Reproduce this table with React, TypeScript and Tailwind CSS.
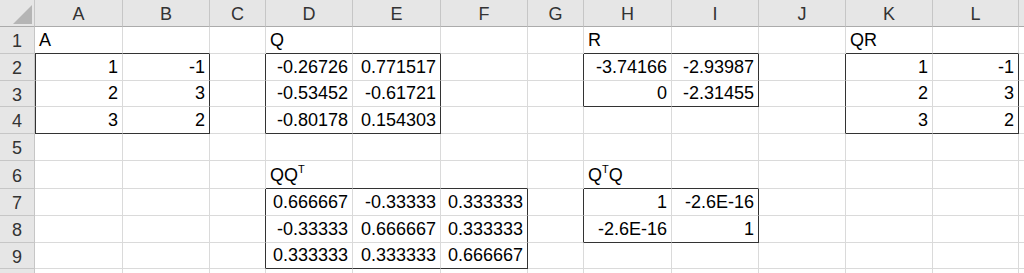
import React from "react";

type Cell = { v: React.ReactNode; left?: boolean };

const COLS = ["A", "B", "C", "D", "E", "F", "G", "H", "I", "J", "K", "L", ""];
const ROW_COUNT = 10;

const T = <sup className="text-[11px] top-[-8px]">T</sup>;

// sheet contents keyed by "col,row" (col index from A = 0, rows from 1)
const DATA: Record<string, Cell> = {
  "0,1": { v: "A", left: true },
  "3,1": { v: "Q", left: true },
  "7,1": { v: "R", left: true },
  "10,1": { v: "QR", left: true },

  "0,2": { v: "1" },
  "1,2": { v: "-1" },
  "3,2": { v: "-0.26726" },
  "4,2": { v: "0.771517" },
  "7,2": { v: "-3.74166" },
  "8,2": { v: "-2.93987" },
  "10,2": { v: "1" },
  "11,2": { v: "-1" },

  "0,3": { v: "2" },
  "1,3": { v: "3" },
  "3,3": { v: "-0.53452" },
  "4,3": { v: "-0.61721" },
  "7,3": { v: "0" },
  "8,3": { v: "-2.31455" },
  "10,3": { v: "2" },
  "11,3": { v: "3" },

  "0,4": { v: "3" },
  "1,4": { v: "2" },
  "3,4": { v: "-0.80178" },
  "4,4": { v: "0.154303" },
  "10,4": { v: "3" },
  "11,4": { v: "2" },

  "3,6": { v: <>QQ{T}</>, left: true },
  "7,6": { v: <>Q{T}Q</>, left: true },

  "3,7": { v: "0.666667" },
  "4,7": { v: "-0.33333" },
  "5,7": { v: "0.333333" },
  "7,7": { v: "1" },
  "8,7": { v: "-2.6E-16" },

  "3,8": { v: "-0.33333" },
  "4,8": { v: "0.666667" },
  "5,8": { v: "0.333333" },
  "7,8": { v: "-2.6E-16" },
  "8,8": { v: "1" },

  "3,9": { v: "0.333333" },
  "4,9": { v: "0.333333" },
  "5,9": { v: "0.666667" },
};

// outlined ranges: columns c0..c1, rows r0..r1
const BOXES = [
  { c0: 0, c1: 1, r0: 2, r1: 4 },
  { c0: 3, c1: 4, r0: 2, r1: 4 },
  { c0: 7, c1: 8, r0: 2, r1: 3 },
  { c0: 10, c1: 11, r0: 2, r1: 4 },
  { c0: 3, c1: 5, r0: 7, r1: 9 },
  { c0: 7, c1: 8, r0: 7, r1: 8 },
];

const rightDark = (c: number, r: number) =>
  BOXES.some((b) => r >= b.r0 && r <= b.r1 && (c === b.c1 || c === b.c0 - 1));
const bottomDark = (c: number, r: number) =>
  BOXES.some((b) => c >= b.c0 && c <= b.c1 && (r === b.r1 || r === b.r0 - 1));
const leftDark = (c: number, r: number) =>
  c === 0 && BOXES.some((b) => b.c0 === 0 && r >= b.r0 && r <= b.r1);

function Corner() {
  return (
    <div className="flex items-end justify-end bg-[#e6e6e6] border-r border-b border-r-[#c6c6c6] border-b-[#ababab] pr-[2px] pb-[2px]">
      <svg width="19" height="19" viewBox="0 0 19 19">
        <polygon points="19,0 19,19 0,19" fill="#b5b5b5" />
      </svg>
    </div>
  );
}

export default function App() {
  const rows = Array.from({ length: ROW_COUNT }, (_, i) => i + 1);
  return (
    <div
      className="w-[1024px] h-[273px] overflow-hidden bg-white text-[18px] text-black"
      style={{ fontFamily: '"Liberation Sans", Arial, sans-serif' }}
    >
      <div className="grid grid-cols-[35px_88px_87px_56px_87px_88px_87px_56px_88px_87px_87px_87px_86px_1fr] grid-rows-[27px_27px_27px_26px_27px_27px_28px_27px_27px_26px_27px]">
        <Corner />
        {COLS.map((c, i) => (
          <div
            key={"h" + i}
            className="flex items-center justify-center bg-[#e6e6e6] border-r border-b border-r-[#c6c6c6] border-b-[#ababab] text-[#333] leading-none pt-[2px]"
          >
            {c}
          </div>
        ))}
        {rows.map((r) => (
          <React.Fragment key={"r" + r}>
            <div className="flex items-center justify-center bg-[#e6e6e6] border-r border-b border-r-[#c6c6c6] border-b-[#c6c6c6] text-[#333] leading-none pt-[2px]">
              {r < ROW_COUNT ? r : null}
            </div>
            {COLS.map((_, c) => {
              const cell = DATA[c + "," + r];
              const rd = rightDark(c, r);
              const bd = bottomDark(c, r);
              const ld = leftDark(c, r);
              return (
                <div
                  key={c + "," + r}
                  className={
                    "flex items-end whitespace-nowrap overflow-visible leading-[20px] pb-[3px] px-[4px] border-r border-b " +
                    (rd ? "border-r-[#333333] " : "border-r-[#dadada] ") +
                    (bd ? "border-b-[#333333] " : "border-b-[#dadada] ") +
                    (ld ? "border-l border-l-[#333333] " : "") +
                    (cell && cell.left ? "justify-start" : "justify-end")
                  }
                >
                  {cell ? <span>{cell.v}</span> : null}
                </div>
              );
            })}
          </React.Fragment>
        ))}
      </div>
    </div>
  );
}
